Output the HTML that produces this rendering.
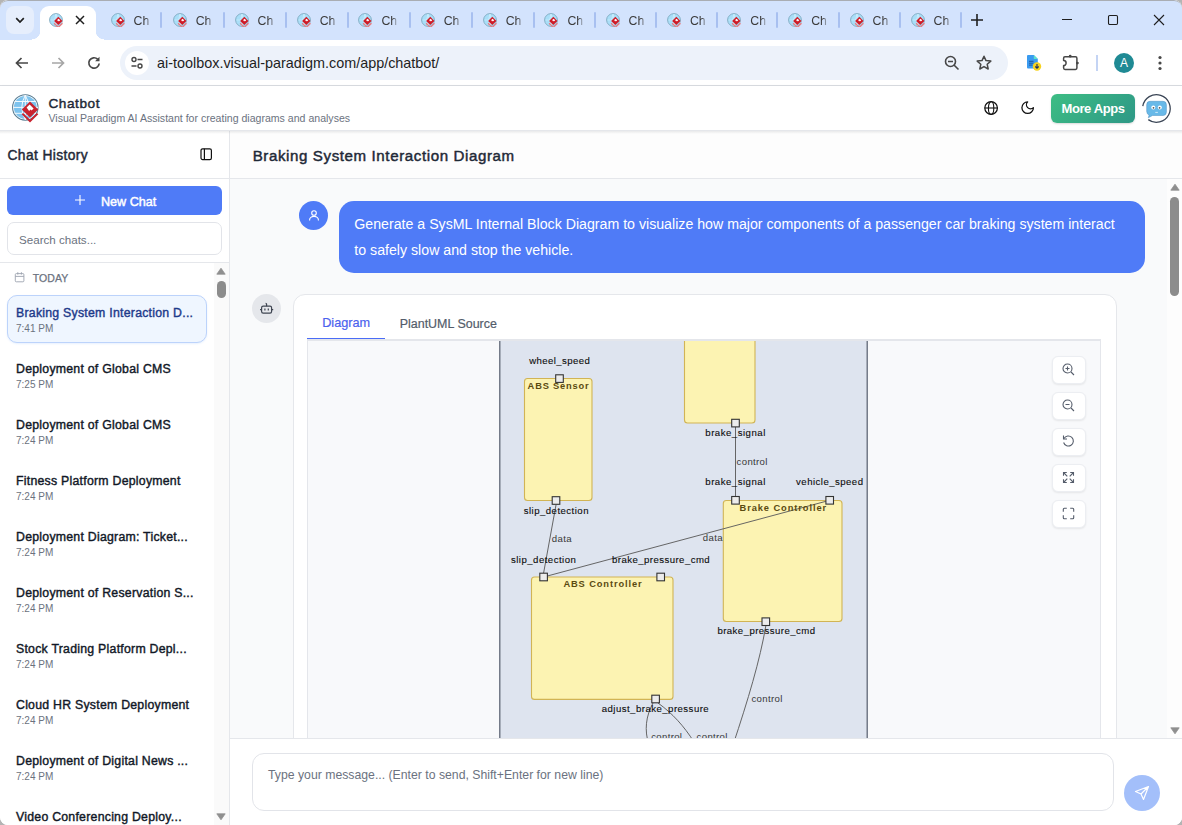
<!DOCTYPE html>
<html><head><meta charset="utf-8">
<style>
*{box-sizing:border-box;margin:0;padding:0}
html,body{width:1182px;height:825px;overflow:hidden;background:#b4b4b4;font-family:"Liberation Sans",sans-serif;position:relative}
.a{position:absolute}
#tabstrip{left:0;top:0;width:1182px;height:40px;background:#d3e3fd;border-top:1px solid #a9adb3;border-radius:8px 8px 0 0}
.fav{position:absolute;top:12.3px}
.tt{position:absolute;top:12.5px;font-size:12.3px;color:#3c3c3c;width:17px;overflow:hidden;white-space:nowrap;-webkit-mask-image:linear-gradient(90deg,#000 70%,transparent 100%)}
.sep{position:absolute;top:11px;width:2px;height:16px;background:#a8c0f0;border-radius:1px}
#toolbar{left:0;top:40px;width:1182px;height:46px;background:#fff;border-bottom:1px solid #d9dce1}
#url{left:120px;top:46px;width:888px;height:34px;border-radius:17px;background:#edf2fa}
#urltext{left:157px;top:55px;font-size:14.4px;color:#1f1f1f;letter-spacing:0}
#apphdr{left:0;top:86px;width:1182px;height:45px;background:#fff;border-bottom:1px solid #e5e7eb;box-shadow:0 1px 3px rgba(0,0,0,.08)}
#sidebar{left:0;top:131px;width:230px;height:694px;background:#fff;border-right:1px solid #e5e7eb}
#main{left:230px;top:131px;width:952px;height:694px;background:#f9fafb}
.ct{left:16px;font-size:12.3px;font-weight:normal;-webkit-text-stroke:0.4px currentColor;letter-spacing:0.25px;white-space:nowrap}
.cm{left:16px;font-size:10px;color:#6b7280}
.zb{left:822px;width:34px;height:28px;border-radius:6px;background:#fff;border:1px solid #eceef2;box-shadow:0 1px 2px rgba(0,0,0,.08)}
.sb{font-weight:normal;-webkit-text-stroke:0.45px currentColor;white-space:nowrap}
</style></head>
<body>
<div id="win" style="position:absolute;left:0;top:0;width:1182px;height:825px;border-radius:8px;overflow:hidden;background:#fff">
<svg width="0" height="0" style="position:absolute">
<defs>
<g id="favi">
<circle cx="7" cy="7" r="6.4" fill="#a9def8" stroke="#7fa9bf" stroke-width="0.9"/>
<path d="M1.5 7h11M7 1v12M7 1q-3 6 0 12M7 1q3 6 0 12" stroke="#d9f2fd" stroke-width="0.5" fill="none"/>
<path d="M9.3 3.7l4.2 4.2-4.2 4.2-4.2-4.2z" fill="#cf1c28"/>
<path d="M5.1 10.2l4.2 4.2 4.2-4.2" stroke="#e87a80" stroke-width="1.3" fill="none"/>
<path d="M8.2 7.1l1.4-1.4 1.6 1.6-1 1-0.5-0.5-0.6 0.6z" fill="#fff"/>
</g>
</defs>
</svg>
<div id="tabstrip" class="a">
 <div class="a" style="left:6px;top:5px;width:28px;height:28px;border-radius:8px;background:#e6eefc"></div>
 <svg class="a" style="left:13px;top:14px" width="14" height="10" viewBox="0 0 14 10"><path d="M3.2 3.2l3.8 3.8 3.8-3.8" stroke="#1f1f1f" stroke-width="1.7" fill="none"/></svg>
 <div class="a" style="left:40px;top:5px;width:56px;height:36px;background:#fff;border-radius:9px 9px 0 0"></div>
 <div class="a" style="left:32px;top:30px;width:8px;height:10px;background:radial-gradient(circle at 0 0,#d3e3fd 8px,#fff 8.5px)"></div>
 <div class="a" style="left:96px;top:30px;width:8px;height:10px;background:radial-gradient(circle at 100% 0,#d3e3fd 8px,#fff 8.5px)"></div>
 <svg class="fav" style="left:48.6px;top:12px" width="14" height="14" viewBox="0 0 14 14"><use href="#favi"/></svg>
 <svg class="a" style="left:75px;top:14px" width="10" height="10" viewBox="0 0 10 10"><path d="M1 1l8 8M9 1l-8 8" stroke="#1f1f1f" stroke-width="1.5"/></svg>
 <svg class="fav" style="left:110.5px" width="14" height="14" viewBox="0 0 14 14"><use href="#favi"/></svg><span class="tt" style="left:133.5px">Ch</span>
<svg class="fav" style="left:172.7px" width="14" height="14" viewBox="0 0 14 14"><use href="#favi"/></svg><span class="tt" style="left:195.7px">Ch</span>
<svg class="fav" style="left:234.6px" width="14" height="14" viewBox="0 0 14 14"><use href="#favi"/></svg><span class="tt" style="left:257.6px">Ch</span>
<svg class="fav" style="left:296.7px" width="14" height="14" viewBox="0 0 14 14"><use href="#favi"/></svg><span class="tt" style="left:319.7px">Ch</span>
<svg class="fav" style="left:358.4px" width="14" height="14" viewBox="0 0 14 14"><use href="#favi"/></svg><span class="tt" style="left:381.4px">Ch</span>
<svg class="fav" style="left:420.7px" width="14" height="14" viewBox="0 0 14 14"><use href="#favi"/></svg><span class="tt" style="left:443.7px">Ch</span>
<svg class="fav" style="left:482.7px" width="14" height="14" viewBox="0 0 14 14"><use href="#favi"/></svg><span class="tt" style="left:505.7px">Ch</span>
<svg class="fav" style="left:544.4px" width="14" height="14" viewBox="0 0 14 14"><use href="#favi"/></svg><span class="tt" style="left:567.4px">Ch</span>
<svg class="fav" style="left:605.5px" width="14" height="14" viewBox="0 0 14 14"><use href="#favi"/></svg><span class="tt" style="left:628.5px">Ch</span>
<svg class="fav" style="left:666.9px" width="14" height="14" viewBox="0 0 14 14"><use href="#favi"/></svg><span class="tt" style="left:689.9px">Ch</span>
<svg class="fav" style="left:727.3px" width="14" height="14" viewBox="0 0 14 14"><use href="#favi"/></svg><span class="tt" style="left:750.3px">Ch</span>
<svg class="fav" style="left:788.2px" width="14" height="14" viewBox="0 0 14 14"><use href="#favi"/></svg><span class="tt" style="left:811.2px">Ch</span>
<svg class="fav" style="left:849.6px" width="14" height="14" viewBox="0 0 14 14"><use href="#favi"/></svg><span class="tt" style="left:872.6px">Ch</span>
<svg class="fav" style="left:910.5px" width="14" height="14" viewBox="0 0 14 14"><use href="#favi"/></svg><span class="tt" style="left:933.5px">Ch</span>
<div class="sep" style="left:160.3px"></div>
<div class="sep" style="left:222.5px"></div>
<div class="sep" style="left:284.5px"></div>
<div class="sep" style="left:346.5px"></div>
<div class="sep" style="left:408.5px"></div>
<div class="sep" style="left:470.5px"></div>
<div class="sep" style="left:532.5px"></div>
<div class="sep" style="left:593.5px"></div>
<div class="sep" style="left:654.5px"></div>
<div class="sep" style="left:715.5px"></div>
<div class="sep" style="left:776.1px"></div>
<div class="sep" style="left:837.5px"></div>
<div class="sep" style="left:898.5px"></div>
<div class="sep" style="left:959.5px"></div>
 <svg class="a" style="left:969px;top:11px" width="16" height="16" viewBox="0 0 16 16"><path d="M8 2v12M2 8h12" stroke="#1f1f1f" stroke-width="1.6"/></svg>
 <svg class="a" style="left:1061px;top:13px" width="12" height="12" viewBox="0 0 12 12"><path d="M1 5.5h10" stroke="#1f1f1f" stroke-width="1.1"/></svg>
 <svg class="a" style="left:1107px;top:13px" width="12" height="12" viewBox="0 0 12 12"><rect x="1.5" y="1.5" width="9" height="9" rx="1.2" stroke="#1f1f1f" stroke-width="1.1" fill="none"/></svg>
 <svg class="a" style="left:1153px;top:13px" width="12" height="12" viewBox="0 0 12 12"><path d="M1 1l10 10M11 1l-10 10" stroke="#1f1f1f" stroke-width="1.1"/></svg>
</div>
<div id="toolbar" class="a"></div>
<svg class="a" style="left:13px;top:54px" width="18" height="18" viewBox="0 0 18 18"><path d="M15 9H3.5M8.5 4L3.5 9l5 5" stroke="#474747" stroke-width="1.7" fill="none"/></svg>
<svg class="a" style="left:49px;top:54px" width="18" height="18" viewBox="0 0 18 18"><path d="M3 9h11.5M9.5 4l5 5-5 5" stroke="#a6a6a6" stroke-width="1.7" fill="none"/></svg>
<svg class="a" style="left:85px;top:54px" width="18" height="18" viewBox="0 0 18 18"><path d="M14.2 9.5A5.2 5.2 0 1 1 12.6 5.2" stroke="#474747" stroke-width="1.7" fill="none"/><path d="M14.5 2.8v4.4h-4.4z" fill="#474747"/></svg>
<div id="url" class="a"></div>
<div class="a" style="left:125px;top:51px;width:24px;height:24px;border-radius:12px;background:#fff"></div>
<svg class="a" style="left:129px;top:55px" width="16" height="16" viewBox="0 0 16 16"><circle cx="5" cy="4.5" r="2" stroke="#474747" stroke-width="1.4" fill="none"/><path d="M8.5 4.5h5M2.5 11h5" stroke="#474747" stroke-width="1.4"/><circle cx="11" cy="11" r="2" stroke="#474747" stroke-width="1.4" fill="none"/></svg>
<div id="urltext" class="a">ai-toolbox.visual-paradigm.com/app/chatbot/</div>
<svg class="a" style="left:943px;top:54px" width="18" height="18" viewBox="0 0 18 18"><circle cx="7.5" cy="7.5" r="5" stroke="#474747" stroke-width="1.6" fill="none"/><path d="M11 11l4.5 4.5M5 7.5h5" stroke="#474747" stroke-width="1.6"/></svg>
<svg class="a" style="left:975px;top:54px" width="18" height="18" viewBox="0 0 18 18"><path d="M9 2.2l2 4.4 4.8.5-3.6 3.2 1 4.7L9 12.6 4.8 15l1-4.7L2.2 7.1 7 6.6z" stroke="#474747" stroke-width="1.5" fill="none" stroke-linejoin="round"/></svg>
<svg class="a" style="left:1024px;top:53px" width="20" height="20" viewBox="0 0 20 20"><path d="M4 2h5.8l4 4v8.6q0 1-1 1H4q-1 0-1-1V3q0-1 1-1z" fill="#3a9bf0"/><path d="M9.8 2l4 4h-4z" fill="#5fe3c8"/><path d="M5 8.3h4.5M5 10.2h4.5M5 12.1h3.5" stroke="#1b4f9a" stroke-width="0.9"/><circle cx="13" cy="13.5" r="4.2" fill="#f7d21e"/><path d="M13 10.9v4.2M11.3 13.5l1.7 1.8 1.7-1.8" stroke="#1d2f5e" stroke-width="1.1" fill="none"/></svg>
<svg class="a" style="left:1061px;top:53px" width="20" height="20" viewBox="0 0 20 20"><path d="M4 3.8H14.5Q15.9 3.8 15.9 5.2V15Q15.9 16.4 14.5 16.4H4Q2.6 16.4 2.6 15V12.6A2.5 2.5 0 0 0 2.6 7.6V5.2Q2.6 3.8 4 3.8z" stroke="#474747" stroke-width="1.5" fill="none" stroke-linejoin="round"/><circle cx="9.2" cy="3.2" r="1.4" fill="#474747"/><circle cx="16.4" cy="10.1" r="1.4" fill="#474747"/></svg>
<div class="a" style="left:1096px;top:55px;width:2px;height:16px;background:#c4d4f4"></div>
<div class="a" style="left:1114px;top:53px;width:20px;height:20px;border-radius:10px;background:#1f8a94;color:#fff;font-size:12px;line-height:20px;text-align:center">A</div>
<svg class="a" style="left:1152px;top:54px" width="16" height="18" viewBox="0 0 16 18"><circle cx="8" cy="3.5" r="1.6" fill="#474747"/><circle cx="8" cy="9" r="1.6" fill="#474747"/><circle cx="8" cy="14.5" r="1.6" fill="#474747"/></svg>

<div id="apphdr" class="a"></div>
<svg class="a" style="left:8px;top:90px" width="36" height="36" viewBox="8 90 36 36">
 <circle cx="25.3" cy="107.4" r="12.7" fill="#fff" stroke="#5a7d92" stroke-width="1.1"/><circle cx="25.3" cy="107.4" r="11.4" fill="#7dc3ee"/>
 <g stroke="#f2faff" stroke-width="1" fill="none"><path d="M13 107.4h25M25.3 95v25M14.5 101.5h21.6M14.5 113.3h21.6"/><path d="M25.3 95.2q-7 12.2 0 24.4M25.3 95.2q7 12.2 0 24.4"/></g>
 <path d="M30 101.4l8.2 8-8.2 8-8.2-8z" fill="#c9232f"/>
 <path d="M22.4 113.6l7.6 7.4 7.6-7.4" stroke="#c9232f" stroke-width="2" fill="none"/>
 <path d="M26.6 107.6l3-3 4 4-2 2-1-1-1.5 1.5z" fill="#fff"/>
</svg>
<div class="a sb" style="left:48.5px;top:96.1px;font-size:13.6px;letter-spacing:0.55px;color:#1f2937">Chatbot</div>
<div class="a" style="left:48.5px;top:111.7px;font-size:10.57px;color:#6b7280">Visual Paradigm AI Assistant for creating diagrams and analyses</div>
<svg class="a" style="left:983px;top:100px" width="16" height="16" viewBox="0 0 16 16"><circle cx="8.1" cy="8" r="6.3" stroke="#111" stroke-width="1.25" fill="none"/><ellipse cx="8.1" cy="8" rx="2.7" ry="6.3" stroke="#111" stroke-width="1.1" fill="none"/><path d="M1.8 8h12.6" stroke="#111" stroke-width="1.1"/></svg>
<svg class="a" style="left:1019.6px;top:100.1px" width="15.33" height="15.33" viewBox="0 0 24 24"><path d="M12 3a6 6 0 0 0 9 9 9 9 0 1 1-9-9Z" stroke="#111" stroke-width="2" fill="none" stroke-linejoin="round"/></svg>
<div class="a" style="left:1051px;top:94px;width:84px;height:29px;border-radius:6px;background:linear-gradient(135deg,#3dbd84,#2e9886);box-shadow:0 1px 2px rgba(0,0,0,.15);color:#fff;font-weight:bold;font-size:13px;line-height:30px;text-align:center;letter-spacing:-0.4px">More Apps</div>
<svg class="a" style="left:1138px;top:90px" width="36" height="36" viewBox="1138 90 36 36">
 <path d="M1142.8 106.2A13.8 13.8 0 1 1 1148.3 119.6" stroke="#3b4656" stroke-width="1.3" fill="none"/>
 <path d="M1150 101.3h13q3.4 0 3.4 3.4v7.4q0 3.4-3.4 3.4h-10.5l-4.2 2.3 0.8-2.9q-2.4-0.9-2.4-3.3v-6.9q0-3.4 3.3-3.4z" fill="#68b9e8" stroke="#4a8fc0" stroke-width="0.5"/>
 <circle cx="1153.3" cy="107.6" r="2" fill="#fff"/><circle cx="1159.8" cy="107.6" r="2" fill="#fff"/>
 <circle cx="1153.5" cy="107.8" r="0.9" fill="#555"/><circle cx="1159.6" cy="107.8" r="0.9" fill="#555"/>
 <path d="M1155.3 112.4h2.6" stroke="#cfe9f8" stroke-width="1"/>
</svg>

<div id="sidebar" class="a">
 <div class="a" style="left:0;top:47px;width:229px;height:1px;background:#e5e7eb"></div>
 <div class="a sb" style="left:7.5px;top:17px;font-size:13.8px;letter-spacing:0.39px;color:#1f2937">Chat History</div>
 <svg class="a" style="left:199px;top:16px" width="14" height="14" viewBox="0 0 14 14"><rect x="2" y="1.8" width="10.4" height="10.8" rx="1.6" stroke="#111" stroke-width="1.2" fill="none"/><path d="M5.4 1.8v10.8" stroke="#111" stroke-width="1.2"/></svg>
 <div class="a" style="left:7px;top:55px;width:215px;height:29px;border-radius:6px;background:#4f7bf7"></div>
 <svg class="a" style="left:74px;top:63px" width="12" height="12" viewBox="0 0 12 12"><path d="M6 1v10M1 6h10" stroke="#fff" stroke-width="1.1"/></svg>
 <div class="a sb" style="left:101px;top:63.9px;font-size:12.6px;color:#fff">New Chat</div>
 <div class="a" style="left:7px;top:91px;width:215px;height:33px;border-radius:7px;background:#fff;border:1px solid #e2e4e9"></div>
 <div class="a" style="left:19px;top:102.3px;font-size:11.6px;color:#6b7280">Search chats...</div>
 <div class="a" style="left:0;top:131px;width:229px;height:1px;background:#e5e7eb"></div>
 <div class="a" style="left:214px;top:132px;width:15px;height:562px;background:#fafafa"></div>
 <svg class="a" style="left:216px;top:136px" width="10" height="8" viewBox="0 0 10 8"><path d="M0.8 7.2L5 1.2l4.2 6z" fill="#8f8f8f" stroke="#8f8f8f" stroke-width="0.8" stroke-linejoin="round"/></svg>
 <div class="a" style="left:217px;top:150px;width:9px;height:17px;border-radius:4.5px;background:#8c8c8c"></div>
 <svg class="a" style="left:216px;top:682px" width="10" height="8" viewBox="0 0 10 8"><path d="M0.8 0.8L5 6.8l4.2-6z" fill="#8f8f8f" stroke="#8f8f8f" stroke-width="0.8" stroke-linejoin="round"/></svg>
 <svg class="a" style="left:13px;top:140px" width="12" height="12" viewBox="0 0 12 12"><rect x="2.3" y="2.6" width="8.6" height="8.2" rx="1" stroke="#9ca3af" stroke-width="0.9" fill="none"/><path d="M2.3 5.4h8.6M4.8 1.2v2.4M8.4 1.2v2.4" stroke="#9ca3af" stroke-width="0.9"/></svg>
 <div class="a sb" style="left:32.7px;top:140.9px;font-size:10.5px;letter-spacing:0.1px;color:#6b7280;-webkit-text-stroke:0.25px #6b7280">TODAY</div>
 <div class="a" style="left:7px;top:164px;width:200px;height:48px;border-radius:10px;background:#eff6ff;border:1px solid #bcd3fb;box-shadow:0 1px 2px rgba(59,130,246,.12)"></div>
 <div class="a ct" style="top:175px;color:#1e3a8a">Braking System Interaction D...</div><div class="a cm" style="top:192px">7:41 PM</div>
 <div class="a ct" style="top:231px;color:#111827">Deployment of Global CMS</div><div class="a cm" style="top:248px">7:25 PM</div>
 <div class="a ct" style="top:287px;color:#111827">Deployment of Global CMS</div><div class="a cm" style="top:304px">7:24 PM</div>
 <div class="a ct" style="top:343px;color:#111827">Fitness Platform Deployment</div><div class="a cm" style="top:360px">7:24 PM</div>
 <div class="a ct" style="top:399px;color:#111827">Deployment Diagram: Ticket...</div><div class="a cm" style="top:416px">7:24 PM</div>
 <div class="a ct" style="top:455px;color:#111827">Deployment of Reservation S...</div><div class="a cm" style="top:472px">7:24 PM</div>
 <div class="a ct" style="top:511px;color:#111827">Stock Trading Platform Depl...</div><div class="a cm" style="top:528px">7:24 PM</div>
 <div class="a ct" style="top:567px;color:#111827">Cloud HR System Deployment</div><div class="a cm" style="top:584px">7:24 PM</div>
 <div class="a ct" style="top:623px;color:#111827">Deployment of Digital News ...</div><div class="a cm" style="top:640px">7:24 PM</div>
 <div class="a ct" style="top:679px;color:#111827">Video Conferencing Deploy...</div><div class="a cm" style="top:696px">7:24 PM</div>
</div>


<div id="main" class="a">
 <div class="a" style="left:0;top:0;width:952px;height:48px;background:#fdfdfd;border-bottom:1px solid #e5e7eb"></div>
 <div class="a sb" style="left:22.7px;top:15.7px;font-size:15.1px;letter-spacing:0.6px;color:#1f2937">Braking System Interaction Diagram</div>
 <!-- user msg -->
 <div class="a" style="left:69px;top:70px;width:29px;height:29px;border-radius:50%;background:#4f7bf7"></div>
 <svg class="a" style="left:76px;top:77px" width="15" height="15" viewBox="0 0 15 15"><circle cx="8" cy="5" r="2.3" stroke="#fff" stroke-width="1.1" fill="none"/><path d="M3.6 12.6v-0.6a4.4 3.6 0 0 1 8.8 0v0.6" stroke="#fff" stroke-width="1.1" fill="none"/></svg>
 <div class="a" style="left:109px;top:70px;width:806px;height:72px;border-radius:15px;background:#4f7bf7"></div>
 <div class="a" style="left:124.3px;top:80.2px;width:800px;font-size:14.18px;line-height:26px;color:#fff">Generate a SysML Internal Block Diagram to visualize how major components of a passenger car braking system interact<br>to safely slow and stop the vehicle.</div>
 <!-- bot -->
 <div class="a" style="left:22px;top:163px;width:29px;height:29px;border-radius:50%;background:#e5e7eb"></div>
 <svg class="a" style="left:29px;top:170px" width="15" height="15" viewBox="0 0 15 15"><rect x="2.6" y="5.2" width="10" height="7" rx="1.6" stroke="#3f4652" stroke-width="1.2" fill="none"/><path d="M7.6 5.2V3.4q0-1-1-1M1 8.7h1.6M12.6 8.7h1.6M5.9 7.6v2M9.3 7.6v2" stroke="#3f4652" stroke-width="1.2" fill="none"/></svg>
 <div class="a" style="left:63px;top:163px;width:824px;height:600px;border-radius:12px;background:#fff;border:1px solid #e5e7eb"></div>
 <div class="a" style="left:92.2px;top:185.4px;font-size:12.7px;color:#4b62ee;-webkit-text-stroke:0.2px #4b62ee">Diagram</div>
 <div class="a" style="left:169.7px;top:185.6px;font-size:12.47px;color:#535c6a;-webkit-text-stroke:0.2px #535c6a">PlantUML Source</div>
 <div class="a" style="left:77px;top:206.6px;width:78px;height:1.5px;background:#4a6cf6"></div>
 <div class="a" style="left:77px;top:208px;width:794px;height:400px;background:#f8f9fb;border-top:2px solid #e4e6eb;border-right:1px solid #e4e6eb;border-left:1px solid #e4e6eb"></div>
 <svg class="a" style="left:269px;top:210px" width="369" height="397" viewBox="499 341 369 397">
 <style>.pl{font:9.6px "Liberation Sans",sans-serif;fill:#0d0d0d;stroke:#0d0d0d;stroke-width:0.12px}.cl{font:9.6px "Liberation Sans",sans-serif;fill:#383838}.bt{font:bold 9.3px "Liberation Sans",sans-serif;fill:#5a4a10}</style>
 <rect x="499" y="339" width="369" height="400" fill="#dee4ef"/>
 <path d="M499.8 339v400M867.2 339v400" stroke="#636a78" stroke-width="1.3"/>
 <rect x="684.5" y="320" width="70.5" height="103" rx="3" fill="#fcf3b2" stroke="#d1b455" stroke-width="1.1"/>
 <rect x="524.5" y="378.5" width="67.5" height="122" rx="3" fill="#fcf3b2" stroke="#d1b455" stroke-width="1.1"/>
 <rect x="723.3" y="500.5" width="118.7" height="121" rx="3" fill="#fcf3b2" stroke="#d1b455" stroke-width="1.1"/>
 <rect x="531.5" y="577" width="141.5" height="122.4" rx="3" fill="#fcf3b2" stroke="#d1b455" stroke-width="1.1"/>
 <path d="M735.5 427V496" stroke="#5e5e5e" stroke-width="0.95" fill="none"/>
 <path d="M556 505L543.6 573" stroke="#5e5e5e" stroke-width="0.95" fill="none"/>
 <path d="M543.6 577L829.7 500.3" stroke="#5e5e5e" stroke-width="0.95" fill="none"/>
 <path d="M765.8 626C760 660 748 700 733 745" stroke="#5e5e5e" stroke-width="0.95" fill="none"/>
 <path d="M653 703C646 716 644 730 649 745" stroke="#5e5e5e" stroke-width="0.95" fill="none"/>
 <path d="M658 703C672 713 684 726 694 742" stroke="#5e5e5e" stroke-width="0.95" fill="none"/>
 <rect x="555.70" y="374.80" width="7.6" height="7.6" fill="#ececec" stroke="#333" stroke-width="1.1"/>
 <rect x="552.20" y="496.70" width="7.6" height="7.6" fill="#ececec" stroke="#333" stroke-width="1.1"/>
 <rect x="731.70" y="419.30" width="7.6" height="7.6" fill="#ececec" stroke="#333" stroke-width="1.1"/>
 <rect x="731.70" y="496.50" width="7.6" height="7.6" fill="#ececec" stroke="#333" stroke-width="1.1"/>
 <rect x="825.90" y="496.50" width="7.6" height="7.6" fill="#ececec" stroke="#333" stroke-width="1.1"/>
 <rect x="539.80" y="573.20" width="7.6" height="7.6" fill="#ececec" stroke="#333" stroke-width="1.1"/>
 <rect x="656.90" y="573.20" width="7.6" height="7.6" fill="#ececec" stroke="#333" stroke-width="1.1"/>
 <rect x="651.80" y="695.20" width="7.6" height="7.6" fill="#ececec" stroke="#333" stroke-width="1.1"/>
 <rect x="762.00" y="617.90" width="7.6" height="7.6" fill="#ececec" stroke="#333" stroke-width="1.1"/>
 <text x="529.2" y="363.8" class="pl" textLength="60.6" lengthAdjust="spacing">wheel_speed</text>
 <text x="527.6" y="389.2" class="bt" textLength="61.1" lengthAdjust="spacing">ABS Sensor</text>
 <text x="523.7" y="513.7" class="pl" textLength="64.8" lengthAdjust="spacing">slip_detection</text>
 <text x="705.3" y="435.7" class="pl" textLength="60" lengthAdjust="spacing">brake_signal</text>
 <text x="736.6" y="464.8" class="cl" textLength="30.8" lengthAdjust="spacing">control</text>
 <text x="705.3" y="485.3" class="pl" textLength="60" lengthAdjust="spacing">brake_signal</text>
 <text x="796.1" y="485.3" class="pl" textLength="66.9" lengthAdjust="spacing">vehicle_speed</text>
 <text x="739.5" y="510.7" class="bt" textLength="86.6" lengthAdjust="spacing">Brake Controller</text>
 <text x="551.7" y="541.6" class="cl" textLength="20" lengthAdjust="spacing">data</text>
 <text x="702.7" y="541.3" class="cl" textLength="20" lengthAdjust="spacing">data</text>
 <text x="511" y="563" class="pl" textLength="64.8" lengthAdjust="spacing">slip_detection</text>
 <text x="612" y="563" class="pl" textLength="97.7" lengthAdjust="spacing">brake_pressure_cmd</text>
 <text x="563.4" y="586.6" class="bt" textLength="78.2" lengthAdjust="spacing">ABS Controller</text>
 <text x="717.4" y="634" class="pl" textLength="97.7" lengthAdjust="spacing">brake_pressure_cmd</text>
 <text x="751.5" y="702" class="cl" textLength="30.8" lengthAdjust="spacing">control</text>
 <text x="601.7" y="711.6" class="pl" textLength="107" lengthAdjust="spacing">adjust_brake_pressure</text>
 <text x="651.2" y="739.5" class="cl" textLength="30.8" lengthAdjust="spacing">control</text>
 <text x="696.6" y="739.5" class="cl" textLength="30.8" lengthAdjust="spacing">control</text>
 </svg>
 <div class="a zb" style="top:224.5px"></div><svg class="a" style="left:831px;top:231px" width="15" height="15" viewBox="0 0 15 15"><circle cx="6.5" cy="6.5" r="4.5" stroke="#555d6b" stroke-width="1.1" fill="none"/><path d="M10 10l3 3M4.5 6.5h4M6.5 4.5v4" stroke="#555d6b" stroke-width="1.1"/></svg>
 <div class="a zb" style="top:260.5px"></div><svg class="a" style="left:831px;top:267px" width="15" height="15" viewBox="0 0 15 15"><circle cx="6.5" cy="6.5" r="4.5" stroke="#555d6b" stroke-width="1.1" fill="none"/><path d="M10 10l3 3M4.5 6.5h4" stroke="#555d6b" stroke-width="1.1"/></svg>
 <div class="a zb" style="top:296.5px"></div><svg class="a" style="left:831px;top:303px" width="15" height="15" viewBox="0 0 15 15"><path d="M3 4.5A5 5 0 1 1 2.6 8.5" stroke="#555d6b" stroke-width="1.1" fill="none"/><path d="M2.5 1.5v3.5H6" stroke="#555d6b" stroke-width="1.1" fill="none"/></svg>
 <div class="a zb" style="top:332.5px"></div><svg class="a" style="left:831px;top:339px" width="15" height="15" viewBox="0 0 15 15"><path d="M2.5 2.5l3.8 3.8M2.5 5.8V2.5h3.3M12.5 2.5l-3.8 3.8M12.5 5.8V2.5H9.2M2.5 12.5l3.8-3.8M2.5 9.2v3.3h3.3M12.5 12.5l-3.8-3.8M12.5 9.2v3.3H9.2" stroke="#555d6b" stroke-width="1.1" fill="none"/></svg>
 <div class="a zb" style="top:368.5px"></div><svg class="a" style="left:831px;top:375px" width="15" height="15" viewBox="0 0 15 15"><path d="M2.3 5.8V3.3q0-1 1-1h2.5M9.2 2.3h2.5q1 0 1 1v2.5M12.7 9.2v2.5q0 1-1 1H9.2M5.8 12.7H3.3q-1 0-1-1V9.2" stroke="#555d6b" stroke-width="1.1" fill="none"/></svg>
 <!-- main scrollbar -->
 <div class="a" style="left:937px;top:48px;width:15px;height:559px;background:#fdfdfd"></div>
 <svg class="a" style="left:940px;top:52px" width="10" height="8" viewBox="0 0 10 8"><path d="M0.8 7.2L5 1.2l4.2 6z" fill="#8f8f8f" stroke="#8f8f8f" stroke-width="0.8" stroke-linejoin="round"/></svg>
 <div class="a" style="left:940px;top:66px;width:9px;height:99px;border-radius:4.5px;background:#8c8c8c"></div>
 <svg class="a" style="left:940px;top:596px" width="10" height="8" viewBox="0 0 10 8"><path d="M0.8 0.8L5 6.8l4.2-6z" fill="#8f8f8f" stroke="#8f8f8f" stroke-width="0.8" stroke-linejoin="round"/></svg>
 <!-- input area -->
 <div class="a" style="left:0;top:607px;width:952px;height:87px;background:#fff;border-top:1px solid #e5e7eb"></div>
 <div class="a" style="left:22px;top:622px;width:862px;height:58px;border-radius:12px;background:#fff;border:1px solid #e2e4e9"></div>
 <div class="a" style="left:38px;top:636.8px;font-size:12.25px;color:#6b7280">Type your message... (Enter to send, Shift+Enter for new line)</div>
 <div class="a" style="left:894px;top:644px;width:36px;height:36px;border-radius:50%;background:#a3bffa"></div>
 <svg class="a" style="left:903px;top:653px" width="18" height="18" viewBox="0 0 18 18"><path d="M15.5 2.5L2.5 7.5l5.5 2.5 2.5 5.5z M15.5 2.5L8 10" stroke="#fff" stroke-width="1.2" fill="none" stroke-linejoin="round"/></svg>
</div>
<div class="a" style="left:0;top:131px;width:1182px;height:3px;background:linear-gradient(rgba(60,64,72,.10),rgba(60,64,72,0))"></div>
</div>
</body></html>
